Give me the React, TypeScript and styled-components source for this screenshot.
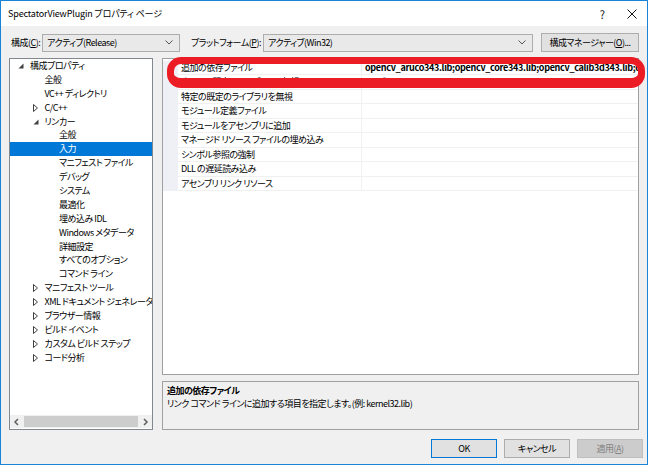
import React from 'react'
import styled, { createGlobalStyle } from 'styled-components'

const GlobalStyle = createGlobalStyle`
  html, body {
    margin: 0;
    padding: 0;
    background: #ffffff;
  }
  * {
    box-sizing: border-box;
  }
`

const Window = styled.div`
  position: relative;
  width: 648px;
  height: 465px;
  border: 1px solid #1883d7;
  background: #f0f0f0;
  display: flex;
  flex-direction: column;
  font-family: 'Noto Sans CJK JP', 'Noto Sans', sans-serif;
  font-size: 9px;
  font-feature-settings: 'palt';
  letter-spacing: -0.5px;
  color: #000;
  overflow: hidden;
`

const TitleBar = styled.div`
  height: 25px;
  background: #ffffff;
  display: flex;
  align-items: center;
  padding-left: 7px;
`

const Title = styled.div`
  flex: 1;
  font-size: 9px;
  letter-spacing: -0.15px;
`

const CaptionButton = styled.div`
  width: 30px;
  height: 25px;
  display: flex;
  align-items: center;
  justify-content: center;
  font-size: 11px;
  color: #111;
`

const Body = styled.div`
  flex: 1;
  display: flex;
  flex-direction: column;
  padding: 7px 4px 0 8px;
`

const Toolbar = styled.div`
  height: 19px;
  display: flex;
  align-items: center;
  margin-bottom: 6px;
`

const Label = styled.span<{ $width: number }>`
  flex-shrink: 0;
  width: ${({ $width }) => $width}px;
  padding-left: 2px;
  white-space: nowrap;
`

const Combo = styled.div<{ $width: number; $gap: number }>`
  flex-shrink: 0;
  width: ${({ $width }) => $width}px;
  margin-right: ${({ $gap }) => $gap}px;
  height: 18px;
  background: #e9e9e9;
  border: 1px solid #adadad;
  display: flex;
  align-items: center;
  padding: 0 6px 0 4px;
  span {
    flex: 1;
  }
`

const Button = styled.div<{ $width: number; $primary?: boolean; $disabled?: boolean }>`
  flex-shrink: 0;
  width: ${({ $width }) => $width}px;
  height: 19px;
  display: flex;
  align-items: center;
  justify-content: center;
  background: ${({ $disabled }) => ($disabled ? '#cccccc' : '#e1e1e1')};
  border: 1px solid
    ${({ $primary, $disabled }) => ($primary ? '#0078d7' : $disabled ? '#bfbfbf' : '#adadad')};
  color: ${({ $disabled }) => ($disabled ? '#838383' : '#000')};
  white-space: nowrap;
`

const Main = styled.div`
  display: grid;
  grid-template-columns: 144px 477px;
  column-gap: 9px;
  height: 372px;
`

const TreePanel = styled.div`
  border: 1px solid #828790;
  background: #ffffff;
  display: flex;
  flex-direction: column;
`

const TreeList = styled.div`
  flex: 1;
  overflow: hidden;
`

const TreeRow = styled.div<{ $level: number; $selected?: boolean }>`
  position: relative;
  height: 13.9px;
  line-height: 13.9px;
  padding-left: ${({ $level }) => 20 + $level * 14.5}px;
  white-space: nowrap;
  overflow: hidden;
  background: ${({ $selected }) => ($selected ? '#0078d7' : 'transparent')};
  color: ${({ $selected }) => ($selected ? '#ffffff' : '#000')};
`

const Arrow = styled.span`
  position: absolute;
  top: 0;
  height: 13.9px;
  display: flex;
  align-items: center;
`

const HScroll = styled.div`
  height: 13px;
  display: flex;
  align-items: center;
  background: #f0f0f0;
  padding: 0 3px;
  gap: 4px;
  margin: 0 0 1px 0;
`

const Thumb = styled.div`
  flex: 1;
  height: 11px;
  background: #cdcdcd;
`

const RightColumn = styled.div`
  display: flex;
  flex-direction: column;
  gap: 6px;
`

const Grid = styled.div`
  flex: 1;
  border: 1px solid #a0a0a0;
  background: #ffffff;
  padding-top: 1.5px;
  display: flex;
  flex-direction: column;
`

const GridRow = styled.div`
  display: grid;
  grid-template-columns: 15px 184px 1fr;
  height: 14.5px;
  line-height: 14px;
`

const Gutter = styled.div`
  background: #eef0f6;
`

const Cell = styled.div<{ $bold?: boolean; $divider?: boolean }>`
  padding-left: 3px;
  border-bottom: 1px solid #f0f0f0;
  border-right: ${({ $divider }) => ($divider ? '1px solid #f0f0f0' : 'none')};
  font-weight: ${({ $bold }) => ($bold ? 700 : 400)};
  letter-spacing: ${({ $bold }) => ($bold ? '-0.3px' : '-0.5px')};
  white-space: nowrap;
  overflow: hidden;
`

const GutterFill = styled.div`
  flex: 1;
  width: 15px;
  background: #ffffff;
`

const Description = styled.div`
  height: 49px;
  border: 1px solid #a0a0a0;
  padding: 2px 4px;
  line-height: 13px;
`

const DescTitle = styled.div`
  font-weight: 700;
`

const Footer = styled.div`
  display: flex;
  justify-content: flex-end;
  gap: 7px;
  padding-top: 9px;
`

const Highlight = styled.div`
  position: absolute;
  left: 166px;
  top: 56px;
  width: 478px;
  height: 31px;
  border-style: solid;
  border-color: #ec1c24;
  border-width: 7px 7px 10px 7px;
  border-radius: 14px;
  pointer-events: none;
`

const U = styled.span`
  text-decoration: underline;
`

type TreeItem = { label: string; level: number; arrow?: 'open' | 'closed'; selected?: boolean }

const tree: TreeItem[] = [
  { label: '構成プロパティ', level: 0, arrow: 'open' },
  { label: '全般', level: 1 },
  { label: 'VC++ ディレクトリ', level: 1 },
  { label: 'C/C++', level: 1, arrow: 'closed' },
  { label: 'リンカー', level: 1, arrow: 'open' },
  { label: '全般', level: 2 },
  { label: '入力', level: 2, selected: true },
  { label: 'マニフェスト ファイル', level: 2 },
  { label: 'デバッグ', level: 2 },
  { label: 'システム', level: 2 },
  { label: '最適化', level: 2 },
  { label: '埋め込み IDL', level: 2 },
  { label: 'Windows メタデータ', level: 2 },
  { label: '詳細設定', level: 2 },
  { label: 'すべてのオプション', level: 2 },
  { label: 'コマンド ライン', level: 2 },
  { label: 'マニフェスト ツール', level: 1, arrow: 'closed' },
  { label: 'XML ドキュメント ジェネレーター', level: 1, arrow: 'closed' },
  { label: 'ブラウザー情報', level: 1, arrow: 'closed' },
  { label: 'ビルド イベント', level: 1, arrow: 'closed' },
  { label: 'カスタム ビルド ステップ', level: 1, arrow: 'closed' },
  { label: 'コード分析', level: 1, arrow: 'closed' },
]

const props: { name: string; value: string; bold?: boolean }[] = [
  {
    name: '追加の依存ファイル',
    value: 'opencv_aruco343.lib;opencv_core343.lib;opencv_calib3d343.lib;opencv_imgproc343.lib',
    bold: true,
  },
  { name: 'すべての既定のライブラリの無視', value: 'いいえ' },
  { name: '特定の既定のライブラリを無視', value: '' },
  { name: 'モジュール定義ファイル', value: '' },
  { name: 'モジュールをアセンブリに追加', value: '' },
  { name: 'マネージド リソース ファイルの埋め込み', value: '' },
  { name: 'シンボル参照の強制', value: '' },
  { name: 'DLL の遅延読み込み', value: '' },
  { name: 'アセンブリ リンク リソース', value: '' },
]

function Chevron() {
  return (
    <svg width="8" height="5" viewBox="0 0 8 5">
      <polyline points="0.5,0.5 4,4 7.5,0.5" fill="none" stroke="#555" strokeWidth="1" />
    </svg>
  )
}

function TreeArrow({ kind }: { kind: 'open' | 'closed' }) {
  if (kind === 'open') {
    return (
      <svg width="6" height="6" viewBox="0 0 6 6">
        <polygon points="5.5,0.5 5.5,5.5 0.5,5.5" fill="#404040" />
      </svg>
    )
  }
  return (
    <svg width="5" height="8" viewBox="0 0 5 8">
      <polygon points="0.5,0.5 4.5,4 0.5,7.5" fill="none" stroke="#404040" strokeWidth="1" />
    </svg>
  )
}

export default function App() {
  return (
    <>
      <GlobalStyle />
      <Window>
        <TitleBar>
          <Title>SpectatorViewPlugin プロパティ ページ</Title>
          <CaptionButton>?</CaptionButton>
          <CaptionButton>
            <svg width="10" height="10" viewBox="0 0 10 10">
              <path d="M0.5 0.5 L9.5 9.5 M9.5 0.5 L0.5 9.5" stroke="#111" strokeWidth="1" />
            </svg>
          </CaptionButton>
        </TitleBar>
        <Body>
          <Toolbar>
            <Label $width={33}>
              構成(<U>C</U>):
            </Label>
            <Combo $width={138} $gap={9}>
              <span>アクティブ(Release)</span>
              <Chevron />
            </Combo>
            <Label $width={74}>
              プラットフォーム(<U>P</U>):
            </Label>
            <Combo $width={270} $gap={8}>
              <span>アクティブ(Win32)</span>
              <Chevron />
            </Combo>
            <Button $width={98}>
              構成マネージャー(<U>O</U>)...
            </Button>
          </Toolbar>
          <Main>
            <TreePanel>
              <TreeList>
                {tree.map((item, i) => (
                  <TreeRow key={i} $level={item.level} $selected={item.selected}>
                    {item.arrow && (
                      <Arrow style={{ left: 8 + item.level * 14.5 }}>
                        <TreeArrow kind={item.arrow} />
                      </Arrow>
                    )}
                    {item.label}
                  </TreeRow>
                ))}
              </TreeList>
              <HScroll>
                <svg width="7" height="8" viewBox="0 0 7 8">
                  <polyline points="5,1 2,4 5,7" fill="none" stroke="#606060" strokeWidth="1.5" />
                </svg>
                <Thumb />
                <svg width="7" height="8" viewBox="0 0 7 8">
                  <polyline points="2,1 5,4 2,7" fill="none" stroke="#606060" strokeWidth="1.5" />
                </svg>
              </HScroll>
            </TreePanel>
            <RightColumn>
              <Grid>
                {props.map((p, i) => (
                  <GridRow key={i}>
                    <Gutter />
                    <Cell $divider>{p.name}</Cell>
                    <Cell $bold={p.bold}>{p.value}</Cell>
                  </GridRow>
                ))}
                <GutterFill />
              </Grid>
              <Description>
                <DescTitle>追加の依存ファイル</DescTitle>
                <div>リンク コマンド ラインに追加する項目を指定します。(例: kernel32.lib)</div>
              </Description>
            </RightColumn>
          </Main>
          <Footer>
            <Button $width={66} $primary>
              OK
            </Button>
            <Button $width={66}>キャンセル</Button>
            <Button $width={66} $disabled>
              適用(<U>A</U>)
            </Button>
          </Footer>
        </Body>
        <Highlight />
      </Window>
    </>
  )
}
